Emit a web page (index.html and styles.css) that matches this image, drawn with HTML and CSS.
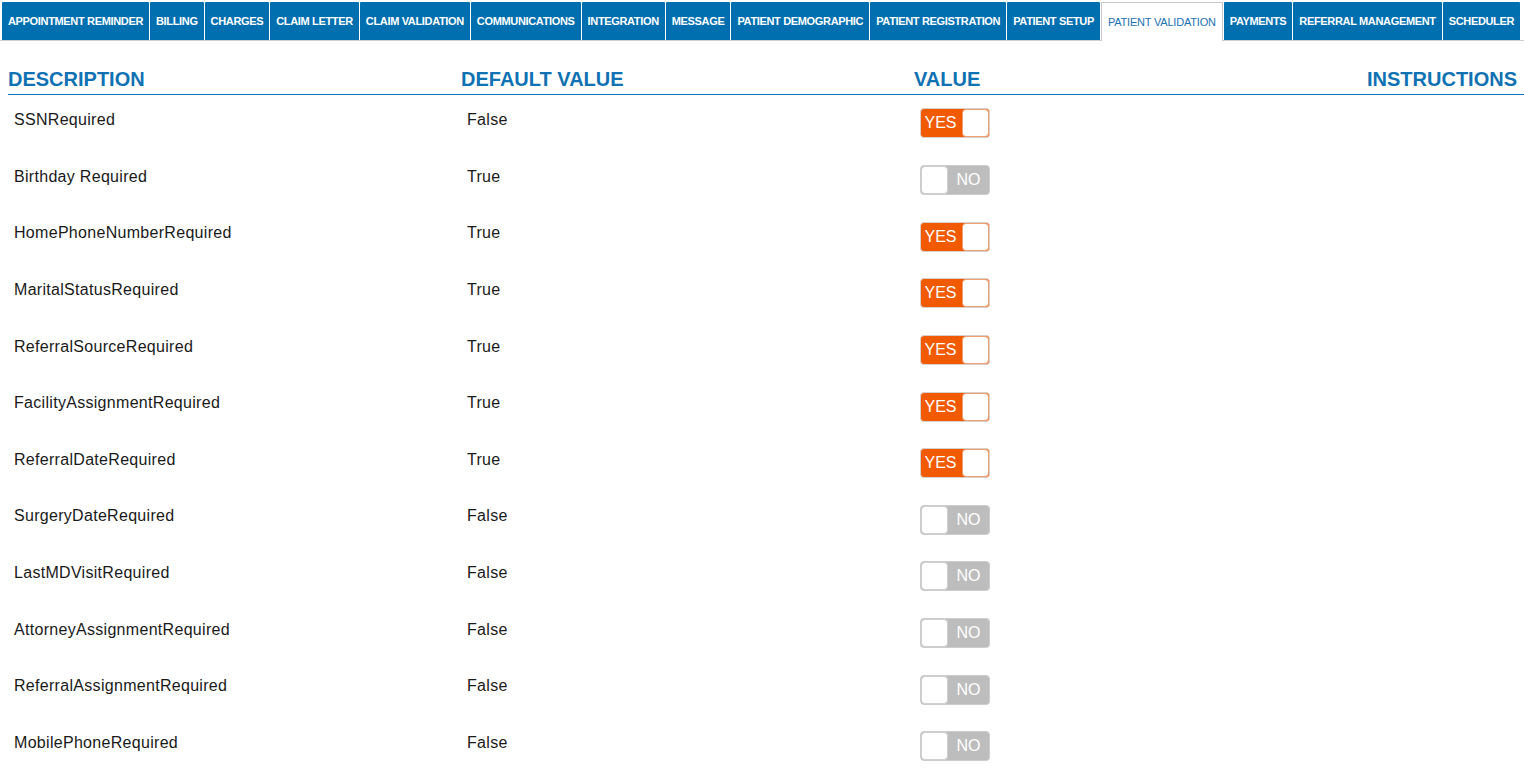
FILE: index.html
```html
<!DOCTYPE html>
<html>
<head>
<meta charset="utf-8">
<link rel="stylesheet" href="styles.css">
</head>
<body>
<nav class="tabs">
  <a class="tab">APPOINTMENT REMINDER</a>
  <a class="tab">BILLING</a>
  <a class="tab">CHARGES</a>
  <a class="tab">CLAIM LETTER</a>
  <a class="tab">CLAIM VALIDATION</a>
  <a class="tab">COMMUNICATIONS</a>
  <a class="tab">INTEGRATION</a>
  <a class="tab">MESSAGE</a>
  <a class="tab">PATIENT DEMOGRAPHIC</a>
  <a class="tab">PATIENT REGISTRATION</a>
  <a class="tab">PATIENT SETUP</a>
  <a class="tab active">PATIENT VALIDATION</a>
  <a class="tab">PAYMENTS</a>
  <a class="tab">REFERRAL MANAGEMENT</a>
  <a class="tab">SCHEDULER</a>
</nav>
<main class="content">
  <div class="grid head">
    <div class="hcell">DESCRIPTION</div>
    <div class="hcell">DEFAULT VALUE</div>
    <div class="hcell">VALUE</div>
    <div class="hcell right">INSTRUCTIONS</div>
  </div>
  <div class="grid row"><div class="cell">SSNRequired</div><div class="cell">False</div><div class="vcell"><span class="toggle on"><span class="lbl">YES</span><span class="knob"></span></span></div><div></div></div>
  <div class="grid row"><div class="cell">Birthday Required</div><div class="cell">True</div><div class="vcell"><span class="toggle off"><span class="knob"></span><span class="lbl">NO</span></span></div><div></div></div>
  <div class="grid row"><div class="cell">HomePhoneNumberRequired</div><div class="cell">True</div><div class="vcell"><span class="toggle on"><span class="lbl">YES</span><span class="knob"></span></span></div><div></div></div>
  <div class="grid row"><div class="cell">MaritalStatusRequired</div><div class="cell">True</div><div class="vcell"><span class="toggle on"><span class="lbl">YES</span><span class="knob"></span></span></div><div></div></div>
  <div class="grid row"><div class="cell">ReferralSourceRequired</div><div class="cell">True</div><div class="vcell"><span class="toggle on"><span class="lbl">YES</span><span class="knob"></span></span></div><div></div></div>
  <div class="grid row"><div class="cell">FacilityAssignmentRequired</div><div class="cell">True</div><div class="vcell"><span class="toggle on"><span class="lbl">YES</span><span class="knob"></span></span></div><div></div></div>
  <div class="grid row"><div class="cell">ReferralDateRequired</div><div class="cell">True</div><div class="vcell"><span class="toggle on"><span class="lbl">YES</span><span class="knob"></span></span></div><div></div></div>
  <div class="grid row"><div class="cell">SurgeryDateRequired</div><div class="cell">False</div><div class="vcell"><span class="toggle off"><span class="knob"></span><span class="lbl">NO</span></span></div><div></div></div>
  <div class="grid row"><div class="cell">LastMDVisitRequired</div><div class="cell">False</div><div class="vcell"><span class="toggle off"><span class="knob"></span><span class="lbl">NO</span></span></div><div></div></div>
  <div class="grid row"><div class="cell">AttorneyAssignmentRequired</div><div class="cell">False</div><div class="vcell"><span class="toggle off"><span class="knob"></span><span class="lbl">NO</span></span></div><div></div></div>
  <div class="grid row"><div class="cell">ReferralAssignmentRequired</div><div class="cell">False</div><div class="vcell"><span class="toggle off"><span class="knob"></span><span class="lbl">NO</span></span></div><div></div></div>
  <div class="grid row"><div class="cell">MobilePhoneRequired</div><div class="cell">False</div><div class="vcell"><span class="toggle off"><span class="knob"></span><span class="lbl">NO</span></span></div><div></div></div>
</main>
</body>
</html>
```
FILE: styles.css
```css
html, body {
  margin: 0;
  padding: 0;
  background: #fff;
  font-family: "Liberation Sans", Arial, sans-serif;
  color: #111;
}

.tabs {
  display: flex;
  gap: 1px;
  padding: 2px 0 0 2px;
  border-bottom: 1px solid #cfcfcf;
  height: 38px;
}

.tab {
  display: flex;
  align-items: center;
  background: #006fb0;
  color: #fff;
  font-size: 11px;
  font-weight: bold;
  letter-spacing: -0.34px;
  padding: 0 6px;
  height: 38px;
  box-sizing: border-box;
  border-radius: 1px 1px 0 0;
  white-space: nowrap;
}

.tab.active {
  background: #fff;
  color: #1a72b4;
  font-weight: normal;
  letter-spacing: -0.2px;
  border: 1px solid #c8c8c8;
  border-bottom: none;
  padding: 0 6px;
  height: 39px;
}

.content {
  padding-left: 8px;
}

.grid {
  display: grid;
  grid-template-columns: 453px 453px 453px 1fr;
}

.head {
  margin-top: 27px;
  border-bottom: 1px solid #1a72b4;
  padding-bottom: 3px;
}

.hcell {
  color: #1071b3;
  font-size: 20px;
  font-weight: bold;
  line-height: 23px;
}

.hcell.right {
  text-align: right;
  padding-right: 8px;
}

.row {
  height: 56.65px;
}

.cell {
  padding: 16px 6px 0;
  font-size: 16px;
  line-height: 18px;
  letter-spacing: 0.3px;
  color: #1a1a1a;
}

.vcell {
  padding-left: 6px;
  display: flex;
  align-items: center;
}

.toggle {
  display: flex;
  align-items: stretch;
  width: 70px;
  height: 30px;
  box-sizing: border-box;
  border: 1px solid #cccccc;
  border-radius: 4px;
  overflow: hidden;
}

.toggle.on {
  background: #f25a00;
  border-color: #d8d0cc;
}

.toggle.off {
  background: #bdbdbd;
}

.lbl {
  flex: 1;
  display: flex;
  align-items: center;
  justify-content: center;
  color: #fff;
  font-size: 16px;
}

.toggle.on .lbl {
  padding-right: 2px;
}

.knob {
  width: 27px;
  background: #fff;
  border: 1px solid #cfcfcf;
  border-radius: 4px;
  box-sizing: border-box;
}

.toggle.on .knob {
  border-color: #f0a070;
}
```
